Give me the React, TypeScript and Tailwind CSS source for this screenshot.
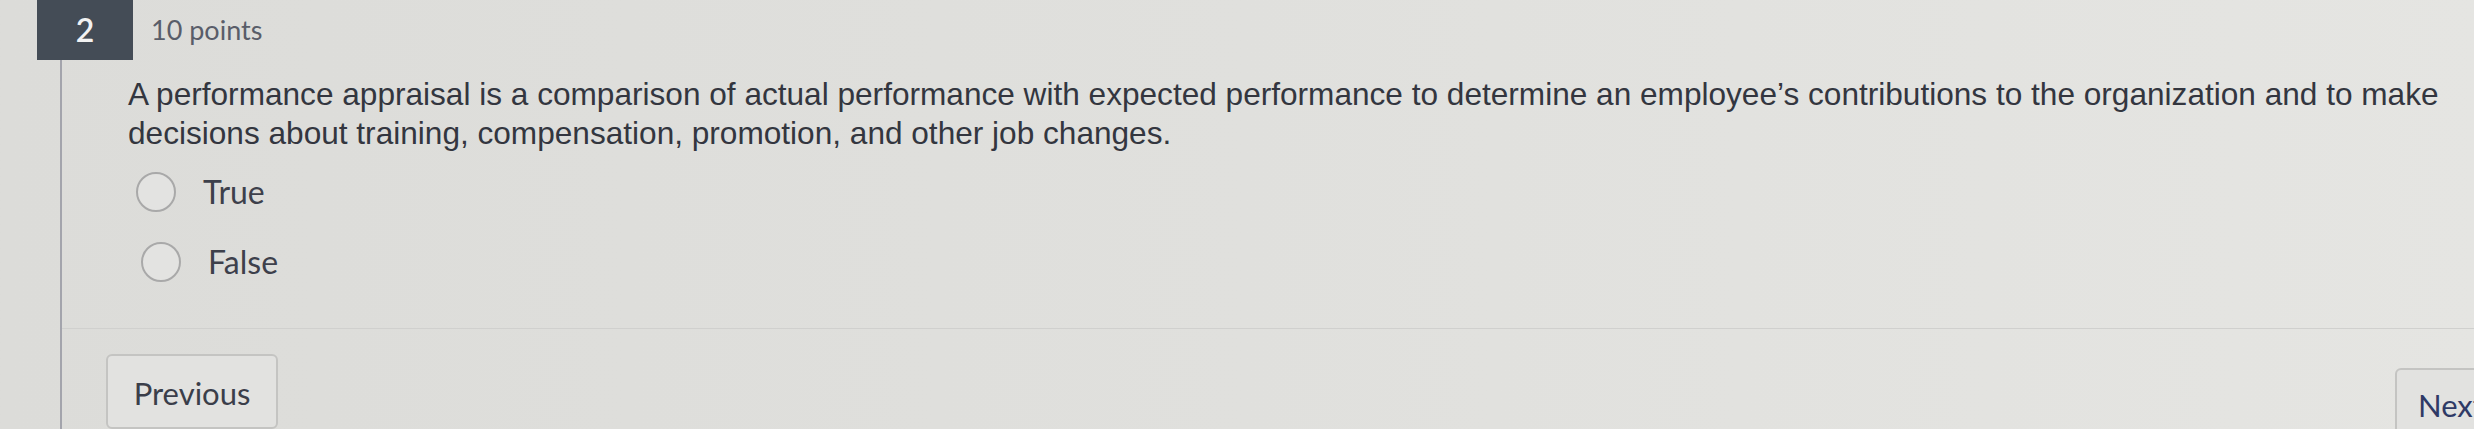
import React from "react";

const lato = { fontFamily: "Lato, 'Open Sans', sans-serif" } as const;
const helv = { fontFamily: "'Liberation Sans', Arial, sans-serif" } as const;

function Radio({ label, offset }: { label: string; offset: string }) {
  return (
    <label className={`flex items-center h-[70px] ${offset}`}>
      <span className="w-[40px] h-[40px] rounded-full border-2 border-[#a9a9a9] bg-[#e3e3e1] shrink-0" />
      <span className="ml-[27px] text-[32px] text-[#3d404b]" style={lato}>
        {label}
      </span>
    </label>
  );
}

export default function App() {
  return (
    <div className="w-[2474px] h-[429px] overflow-hidden flex flex-col bg-gradient-to-r from-[#dcdcd9] via-[#e0e0dd] to-[#e5e5e2]">
      {/* question header */}
      <div className="flex items-center h-[60px] shrink-0">
        <div
          className="ml-[37px] w-[96px] h-[60px] bg-[#444c56] flex items-center justify-center text-[32px] font-semibold text-[#f2f2f2]"
          style={lato}
        >
          2
        </div>
        <div className="ml-[18px] text-[27px] text-[#595d69]" style={lato}>
          10 points
        </div>
      </div>

      {/* question body */}
      <div className="flex-1 ml-[60px] border-l-2 border-[#a3a4ac] flex flex-col">
        <p
          className="ml-[66px] mt-[15px] text-[31.6px] leading-[39px] text-[#33363f] whitespace-nowrap"
          style={helv}
        >
          A performance appraisal is a comparison of actual performance with expected performance to determine an
          employee’s contributions to the organization and to make
          <br />
          decisions about training, compensation, promotion, and other job changes.
        </p>

        <div className="mt-[4px] flex flex-col">
          <Radio label="True" offset="ml-[74px]" />
          <Radio label="False" offset="ml-[79px]" />
        </div>

        <div className="mt-[31px] border-t border-[#d0d0ce]" />

        <div className="flex items-start -mr-[80px]">
          <button
            className="ml-[44px] mt-[25px] w-[172px] h-[75px] rounded-[6px] border-2 border-[#c4c4c2] bg-[#e2e2e0] text-[31px] text-[#3a3e4a] flex items-center justify-center pt-[4px]"
            style={lato}
          >
            Previous
          </button>
          <button
            className="ml-auto mt-[39px] w-[159px] h-[75px] rounded-[6px] border-2 border-[#c4c4c2] bg-[#e2e2e0] text-[31px] text-[#2f3a66] flex items-start pl-[21px] pt-[12px]"
            style={lato}
          >
            Next
          </button>
        </div>
      </div>
    </div>
  );
}
